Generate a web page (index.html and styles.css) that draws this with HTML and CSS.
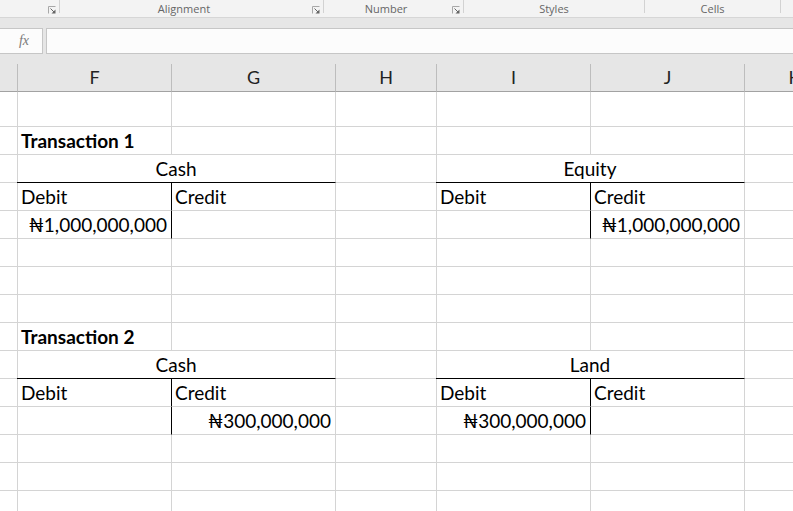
FILE: index.html
```html
<!DOCTYPE html>
<html lang="en">
<head>
<meta charset="utf-8">
<title>Sheet</title>
<link rel="stylesheet" href="styles.css">
</head>
<body>
<div class="ribbon">
  <div class="grp g1 has-dl"><span class="lbl"></span><svg class="dl" viewBox="0 0 8 8"><path d="M0.5 7.5V0.5H7.5" fill="none" stroke="#a8a8a8" stroke-width="1"/><path d="M2.5 2.5L6 6" stroke="#666" stroke-width="1"/><path d="M3.5 7.5H7.5V3.5Z" fill="#666"/></svg></div>
  <div class="sep"></div>
  <div class="grp g2 has-dl"><span class="lbl">Alignment</span><svg class="dl" viewBox="0 0 8 8"><path d="M0.5 7.5V0.5H7.5" fill="none" stroke="#a8a8a8" stroke-width="1"/><path d="M2.5 2.5L6 6" stroke="#666" stroke-width="1"/><path d="M3.5 7.5H7.5V3.5Z" fill="#666"/></svg></div>
  <div class="sep"></div>
  <div class="grp g3 has-dl"><span class="lbl">Number</span><svg class="dl" viewBox="0 0 8 8"><path d="M0.5 7.5V0.5H7.5" fill="none" stroke="#a8a8a8" stroke-width="1"/><path d="M2.5 2.5L6 6" stroke="#666" stroke-width="1"/><path d="M3.5 7.5H7.5V3.5Z" fill="#666"/></svg></div>
  <div class="sep"></div>
  <div class="grp g4"><span class="lbl">Styles</span></div>
  <div class="sep"></div>
  <div class="grp g5"><span class="lbl">Cells</span></div>
  <div class="sep"></div>
  <div class="grp g6"></div>
</div>

<div class="fbar">
  <div class="fx">fx</div>
  <div class="finput"></div>
</div>

<div class="sheet">
  <div class="row hdr">
    <div class="h"></div><div class="h">F</div><div class="h">G</div><div class="h">H</div><div class="h">I</div><div class="h">J</div><div class="h">K</div>
  </div>
  <div class="row first">
    <div class="c"></div><div class="c"></div><div class="c"></div><div class="c"></div><div class="c"></div><div class="c"></div><div class="c"></div>
  </div>
  <div class="row">
    <div class="c"></div><div class="c b">Transaction 1</div><div class="c"></div><div class="c"></div><div class="c"></div><div class="c"></div><div class="c"></div>
  </div>
  <div class="row">
    <div class="c"></div><div class="c m">Cash</div><div class="c"></div><div class="c m">Equity</div><div class="c"></div>
  </div>
  <div class="row">
    <div class="c"></div><div class="c br">Debit</div><div class="c">Credit</div><div class="c"></div><div class="c br">Debit</div><div class="c">Credit</div><div class="c"></div>
  </div>
  <div class="row">
    <div class="c"></div><div class="c br r">₦1,000,000,000</div><div class="c"></div><div class="c"></div><div class="c br"></div><div class="c r">₦1,000,000,000</div><div class="c"></div>
  </div>
  <div class="row">
    <div class="c"></div><div class="c"></div><div class="c"></div><div class="c"></div><div class="c"></div><div class="c"></div><div class="c"></div>
  </div>
  <div class="row">
    <div class="c"></div><div class="c"></div><div class="c"></div><div class="c"></div><div class="c"></div><div class="c"></div><div class="c"></div>
  </div>
  <div class="row">
    <div class="c"></div><div class="c"></div><div class="c"></div><div class="c"></div><div class="c"></div><div class="c"></div><div class="c"></div>
  </div>
  <div class="row">
    <div class="c"></div><div class="c b">Transaction 2</div><div class="c"></div><div class="c"></div><div class="c"></div><div class="c"></div><div class="c"></div>
  </div>
  <div class="row">
    <div class="c"></div><div class="c m">Cash</div><div class="c"></div><div class="c m">Land</div><div class="c"></div>
  </div>
  <div class="row">
    <div class="c"></div><div class="c br">Debit</div><div class="c">Credit</div><div class="c"></div><div class="c br">Debit</div><div class="c">Credit</div><div class="c"></div>
  </div>
  <div class="row">
    <div class="c"></div><div class="c br"></div><div class="c r">₦300,000,000</div><div class="c"></div><div class="c br r">₦300,000,000</div><div class="c"></div><div class="c"></div>
  </div>
  <div class="row">
    <div class="c"></div><div class="c"></div><div class="c"></div><div class="c"></div><div class="c"></div><div class="c"></div><div class="c"></div>
  </div>
  <div class="row">
    <div class="c"></div><div class="c"></div><div class="c"></div><div class="c"></div><div class="c"></div><div class="c"></div><div class="c"></div>
  </div>
  <div class="row">
    <div class="c"></div><div class="c"></div><div class="c"></div><div class="c"></div><div class="c"></div><div class="c"></div><div class="c"></div>
  </div>
</div>
</body>
</html>
```

FILE: styles.css
```css
* { box-sizing: border-box; margin: 0; padding: 0; }
html, body { width: 793px; height: 511px; overflow: hidden; background: #fff; }
body { font-family: Lato, "Noto Sans", sans-serif; }

.ribbon {
  display: flex;
  height: 18px;
  background: #f3f3f3;
  border-bottom: 1px solid #d6d6d6;
  font-family: "Open Sans", sans-serif;
  font-size: 11px;
  color: #666;
}
.grp { display: flex; align-items: flex-start; }
.grp .lbl { flex: 1; text-align: center; line-height: 17px; white-space: nowrap; }
.grp.has-dl .lbl { padding-right: 4px; }
.grp .dl { width: 8px; height: 8px; margin: 6px 3px 0 0; flex: none; }
.sep { width: 1px; height: 13px; background: #d2d2d2; flex: none; }
.g1 { width: 59px; }
.g2 { width: 263px; }
.g3 { width: 139px; }
.g4 { width: 180px; }
.g5 { width: 135px; }
.g6 { flex: 1; }

.fbar {
  display: flex;
  gap: 3px;
  padding: 10px 0;
  background: #e6e6e6;
}
.fx {
  margin-left: -1px;
  width: 44px;
  height: 26px;
  padding-left: 6px;
  display: flex;
  align-items: center;
  justify-content: center;
  background: #fcfcfc;
  border: 1px solid #c6c6c6;
  font: italic 14px "Liberation Serif", serif;
  color: #7a7a7a;
}
.finput {
  flex: 1;
  height: 26px;
  background: #fcfcfc;
  border: 1px solid #c6c6c6;
  border-right: none;
}

.row {
  display: grid;
  grid-template-columns: 18px 154px 164px 101px 154px 154px 100px;
  height: 28px;
}
.row.first { height: 35px; }
.row.hdr { background: #e6e6e6; }
.h {
  border-right: 1px solid #bdbdbd;
  border-bottom: 1px solid #a2a2a2;
  text-align: center;
  font-size: 18px;
  line-height: 27px;
  color: #222;
}
.c {
  border-right: 1px solid #d4d4d4;
  border-bottom: 1px solid #d4d4d4;
  padding: 0 3px;
  font-size: 19px;
  line-height: 27px;
  color: #000;
  white-space: nowrap;
  overflow: hidden;
}
.c.b { font-weight: 700; }
.c.m {
  grid-column: span 2;
  margin-left: -1px;
  text-align: center;
  border-bottom-color: #000;
}
.c.br { border-right-color: #000; }
.c.r { text-align: right; padding-right: 4px; }
```
